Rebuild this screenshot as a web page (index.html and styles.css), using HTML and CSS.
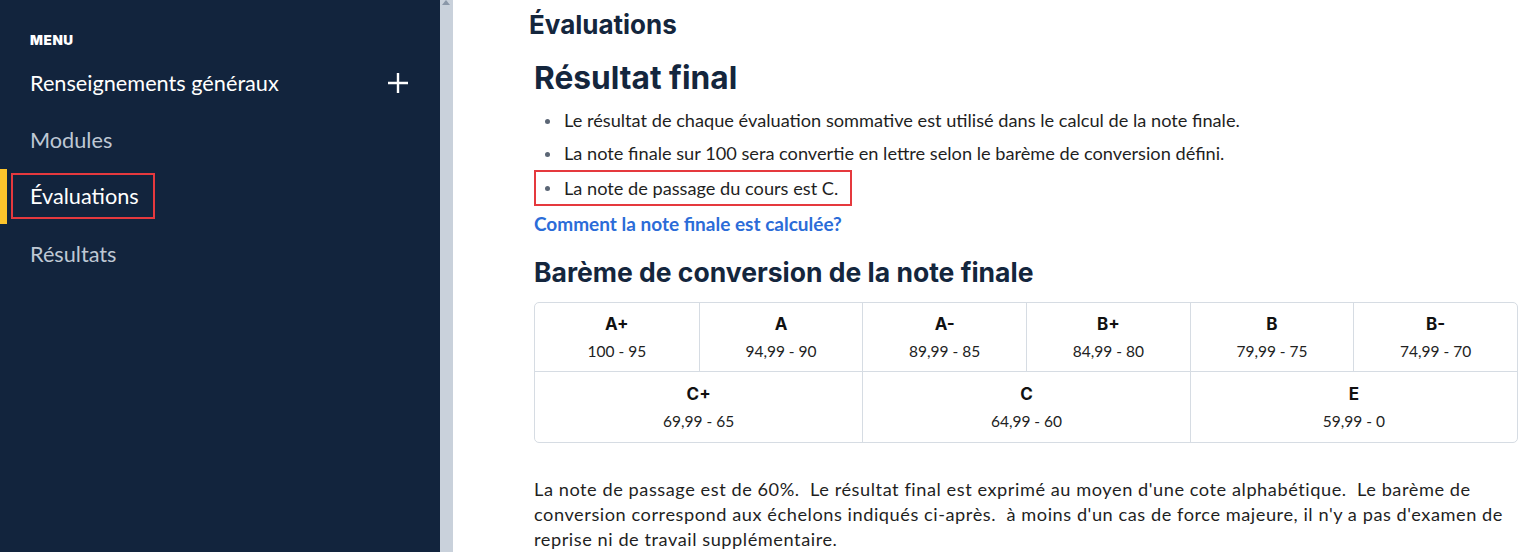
FILE: index.html
```html
<!DOCTYPE html>
<html lang="fr">
<head>
<meta charset="utf-8">
<title>Évaluations</title>
<link rel="stylesheet" href="styles.css">
</head>
<body>
<div class="page">
  <aside class="sidebar">
    <div class="menu-label">MENU</div>
    <nav class="nav">
      <div class="nav-item nav-parent">
        <span>Renseignements généraux</span>
        <svg class="plus" width="22" height="22" viewBox="0 0 22 22"><path d="M11 1v20M1 11h20" stroke="#fff" stroke-width="2.4" fill="none"/></svg>
      </div>
      <div class="nav-item nav-muted">Modules</div>
      <div class="nav-item nav-active"><span class="hl">Évaluations</span></div>
      <div class="nav-item nav-muted">Résultats</div>
    </nav>
  </aside>
  <div class="scrollbar"><span class="arrow"></span></div>
  <main class="content">
    <h1 class="page-title">Évaluations</h1>
    <section class="section">
      <h2 class="h2">Résultat final</h2>
      <ul class="bullets">
        <li>Le résultat de chaque évaluation sommative est utilisé dans le calcul de la note finale.</li>
        <li>La note finale sur 100 sera convertie en lettre selon le barème de conversion défini.</li>
        <li class="boxed">La note de passage du cours est C.</li>
      </ul>
      <a class="link" href="#">Comment la note finale est calculée?</a>
      <h3 class="h3">Barème de conversion de la note finale</h3>
      <div class="scale">
        <div class="row six">
          <div class="cell"><b>A+</b><span>100 - 95</span></div>
          <div class="cell"><b>A</b><span>94,99 - 90</span></div>
          <div class="cell"><b>A-</b><span>89,99 - 85</span></div>
          <div class="cell"><b>B+</b><span>84,99 - 80</span></div>
          <div class="cell"><b>B</b><span>79,99 - 75</span></div>
          <div class="cell"><b>B-</b><span>74,99 - 70</span></div>
        </div>
        <div class="row three">
          <div class="cell"><b>C+</b><span>69,99 - 65</span></div>
          <div class="cell"><b>C</b><span>64,99 - 60</span></div>
          <div class="cell"><b>E</b><span>59,99 - 0</span></div>
        </div>
      </div>
      <p class="note">La note de passage est de 60%.&nbsp; Le résultat final est exprimé au moyen d'une cote alphabétique.&nbsp; Le barème de conversion correspond aux échelons indiqués ci-après.&nbsp; à moins d'un cas de force majeure, il n'y a pas d'examen de reprise ni de travail supplémentaire.</p>
    </section>
  </main>
</div>
</body>
</html>
```

FILE: styles.css
```css
* { box-sizing: border-box; }
html, body { margin: 0; padding: 0; height: 100%; overflow: hidden; }
body { font-family: "Lato", "Noto Sans", sans-serif; color: #222; background: #fff; }
.page { display: flex; height: 552px; }

.sidebar {
  width: 440px;
  flex: none;
  background: #12243d;
  padding: 32px 0 0 0;
  color: #fff;
}
.menu-label {
  font-family: "Inter", sans-serif;
  font-weight: 900;
  font-size: 13.5px;
  letter-spacing: 0.6px;
  padding-left: 30px;
  height: 16px;
  line-height: 16px;
}
.nav { display: flex; flex-direction: column; margin-top: 6px; }
.nav-item {
  font-size: 21.7px;
  line-height: 28px;
  height: 57px;
  display: flex;
  align-items: center;
  padding-left: 30px;
}
.nav-parent { justify-content: space-between; padding-right: 31px; color: #fff; }
.nav-muted { color: #bfc8d4; }
.nav-active {
  color: #fff;
  border-left: 7px solid #fcc42c;
  padding-left: 4px;
  height: 55px;
  margin: 1px 0;
}
.hl {
  border: 2px solid #e5393e;
  padding: 8px 14px 8px 17px;
  line-height: 26px;
  position: relative;
  top: -1px;
}

.scrollbar {
  width: 13px;
  flex: none;
  background: #c9d1db;
  position: relative;
}
.arrow {
  position: absolute;
  left: 2px;
  top: 0;
  width: 0; height: 0;
  border-left: 4px solid transparent;
  border-right: 4px solid transparent;
  border-bottom: 5px solid #8a97a8;
}

.content { flex: 1; padding: 10px 18px 0 76px; }
.page-title {
  font-family: "Inter", sans-serif;
  font-weight: 700;
  font-size: 26px;
  line-height: 30px;
  margin: 0;
  color: #14263d;
}
.section { padding-left: 5px; }
.h2 {
  font-family: "Inter", sans-serif;
  font-weight: 700;
  font-size: 31.7px;
  line-height: 40px;
  margin: 18px 0 6px;
  color: #14263d;
}
.bullets { list-style: none; margin: 0; padding: 0; }
.bullets li {
  font-size: 18.2px;
  line-height: 33px;
  padding-left: 30px;
  position: relative;
  color: #1f1f1f;
}
.bullets li::before {
  content: "";
  position: absolute;
  left: 11px;
  top: 15px;
  width: 5px; height: 5px;
  border-radius: 50%;
  background: #5b6675;
}
.bullets li.boxed {
  display: inline-block;
  border: 2px solid #e5393e;
  padding-left: 28px;
  padding-right: 12px;
  line-height: 32px;
}
.bullets li.boxed::before { left: 9px; top: 14px; }
.link {
  display: block;
  color: #2b6cd8;
  font-weight: 700;
  font-size: 19px;
  text-decoration: none;
  margin-top: 3px;
  line-height: 30px;
}
.h3 {
  font-family: "Inter", sans-serif;
  font-weight: 700;
  font-size: 26.5px;
  line-height: 34px;
  margin: 16px 0 13px;
  color: #14263d;
}
.scale {
  border: 1px solid #d6dce3;
  border-radius: 5px;
}
.row { display: grid; }
.six { grid-template-columns: repeat(6, 1fr); border-bottom: 1px solid #d6dce3; }
.three { grid-template-columns: repeat(3, 1fr); }
.cell {
  display: flex;
  flex-direction: column;
  align-items: center;
  gap: 3px;
  padding: 9px 0 8px;
  border-left: 1px solid #d6dce3;
}
.cell:first-child { border-left: none; }
.cell b {
  font-family: "Inter", sans-serif;
  font-weight: 700;
  font-size: 17px;
  line-height: 24px;
  color: #111;
}
.cell span { font-size: 15.5px; line-height: 24px; color: #222; }
.three .cell { padding: 10px 0 9px; }
.note {
  font-size: 18.2px;
  line-height: 25px;
  letter-spacing: 0.55px;
  margin: 34px 0 0;
  color: #1f1f1f;
}
```
